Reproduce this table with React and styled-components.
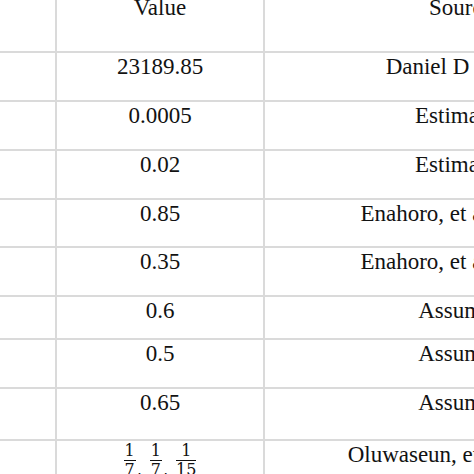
import React from 'react'
import styled, { createGlobalStyle } from 'styled-components'

const rows = [
  { value: '23189.85', source: 'Daniel D (2020)', height: 49 },
  { value: '0.0005', source: 'Estimated', height: 49 },
  { value: '0.02', source: 'Estimated', height: 49 },
  { value: '0.85', source: 'Enahoro, et al. (2020)', height: 48 },
  { value: '0.35', source: 'Enahoro, et al. (2020)', height: 49 },
  { value: '0.6', source: 'Assumed', height: 43 },
  { value: '0.5', source: 'Assumed', height: 49 },
  { value: '0.65', source: 'Assumed', height: 52 },
]

const Fraction = ({ top, bottom }) => (
  <Frac>
    <Numerator>{top}</Numerator>
    <Denominator>{bottom}</Denominator>
  </Frac>
)

export default function App() {
  return (
    <>
      <GlobalStyle />
      <Table>
        <Row height={59}>
          <Cell />
          <Cell>Value</Cell>
          <Cell>Source</Cell>
        </Row>
        {rows.map((row, i) => (
          <Row key={i} height={row.height}>
            <Cell />
            <Cell>{row.value}</Cell>
            <Cell>{row.source}</Cell>
          </Row>
        ))}
        <Row height={60}>
          <Cell />
          <Cell>
            <FractionList>
              <Fraction top="1" bottom="7" /><Comma>,</Comma>
              <Fraction top="1" bottom="7" /><Comma>,</Comma>
              <Fraction top="1" bottom="15" />
            </FractionList>
          </Cell>
          <Cell>Oluwaseun, et al. (2020)</Cell>
        </Row>
      </Table>
    </>
  )
}

const GlobalStyle = createGlobalStyle`
  html, body {
    margin: 0;
    padding: 0;
    background: #fff;
    overflow: hidden;
  }
  body {
    width: 474px;
    height: 474px;
  }
`

const Table = styled.div`
  display: flex;
  flex-direction: column;
  width: 659px;
  margin-top: -6px;
  font-family: "Liberation Serif", "Times New Roman", serif;
  font-size: 23px;
  line-height: 26px;
  color: #121212;
`

const Row = styled.div`
  display: grid;
  grid-template-columns: 57px 208px 394px;
  height: ${props => props.height}px;
  flex-shrink: 0;
  box-sizing: border-box;
  border-bottom: 2px solid #dadada;
`

const Cell = styled.div`
  box-sizing: border-box;
  padding-top: 1px;
  text-align: center;
  white-space: nowrap;
  border-right: 2px solid #dadada;
`

const FractionList = styled.div`
  display: flex;
  justify-content: center;
  align-items: flex-end;
  padding-top: 2px;
  font-family: "DejaVu Serif", serif;
  font-size: 16px;
  line-height: 14px;
`

const Frac = styled.span`
  display: inline-flex;
  flex-direction: column;
  align-items: stretch;
  text-align: center;
  padding: 0 1px;
`

const Numerator = styled.span`
  padding: 0 1px 2px;
  border-bottom: 1.5px solid #121212;
`

const Denominator = styled.span`
  padding-top: 2px;
`

const Comma = styled.span`
  margin-right: 7px;
`
